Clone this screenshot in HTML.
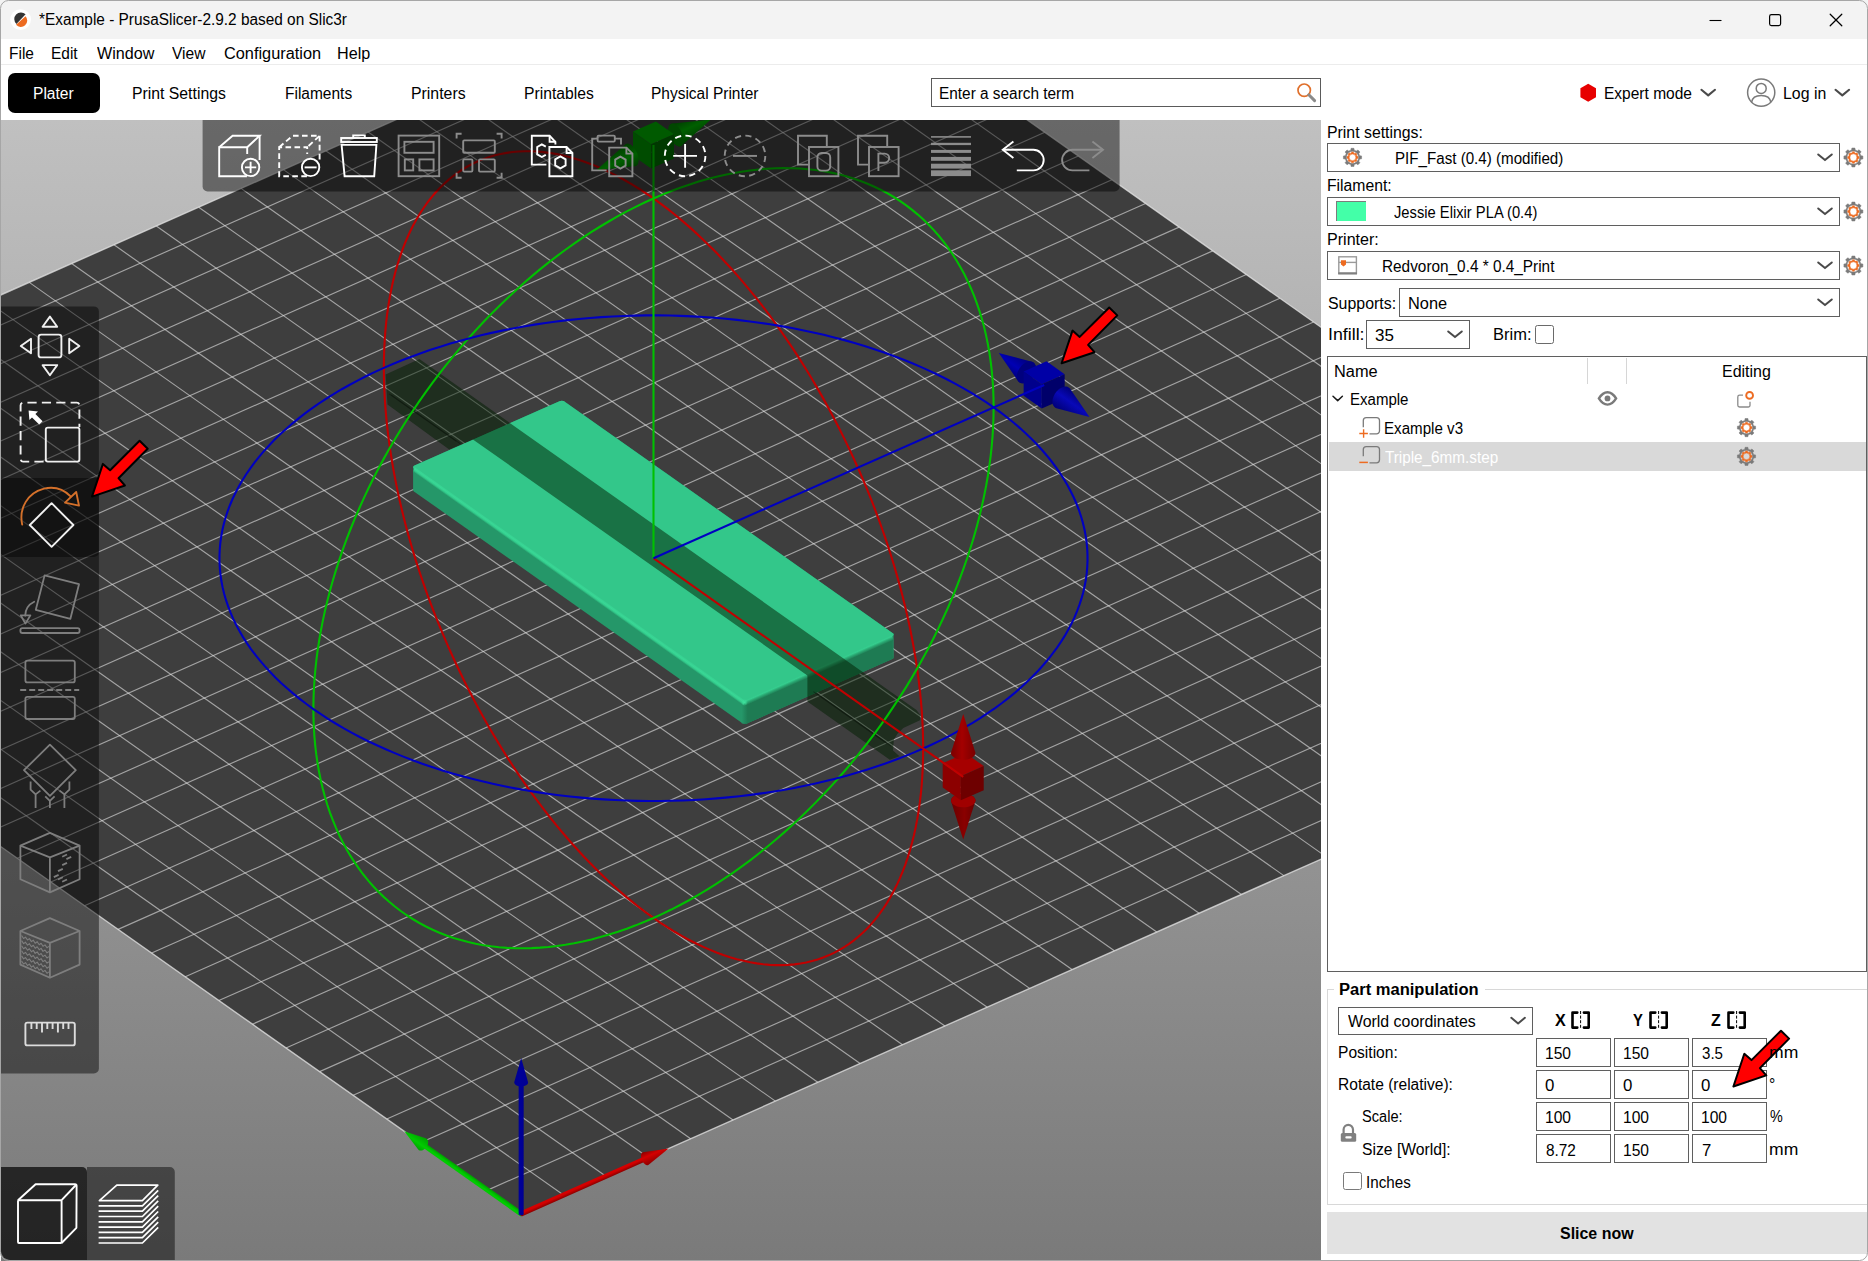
<!DOCTYPE html>
<html lang="en"><head><meta charset="utf-8"><title>*Example - PrusaSlicer-2.9.2 based on Slic3r</title>
<style>
html,body{margin:0;padding:0;background:#fff;}
body{width:1868px;height:1261px;position:relative;overflow:hidden;font-family:"Liberation Sans", "DejaVu Sans", sans-serif;}
.b{position:absolute;}
.t{position:absolute;white-space:pre;transform-origin:0 50%;}
svg{position:absolute;left:0;top:0;}
</style></head>
<body>
<div class="b" style="left:0px;top:0px;width:1868px;height:39px;background:#f3f3f3"></div>
<div class="b" style="left:0px;top:39px;width:1868px;height:1222px;background:#fff"></div>
<div class="b" style="left:0px;top:64px;width:1868px;height:1.4px;background:#ececec"></div>
<div class="b" style="left:8px;top:73px;width:92px;height:40px;background:#000;border-radius:7px"></div>
<div class="b" style="left:931px;top:78px;width:390px;height:29px;border:1px solid #5a5a5a;box-sizing:border-box;background:#fff"></div>
<div class="b" style="left:1327px;top:143px;width:513px;height:29px;border:1px solid #5f5f5f;box-sizing:border-box;background:#fff"></div>
<div class="b" style="left:1327px;top:197px;width:513px;height:29px;border:1px solid #5f5f5f;box-sizing:border-box;background:#fff"></div>
<div class="b" style="left:1336px;top:201px;width:30px;height:20px;background:#43ffa8;border-top:1px solid #7c7c7c;border-left:1px solid #7c7c7c;box-sizing:border-box"></div>
<div class="b" style="left:1327px;top:251px;width:513px;height:29px;border:1px solid #5f5f5f;box-sizing:border-box;background:#fff"></div>
<div class="b" style="left:1399px;top:288px;width:441px;height:29px;border:1px solid #5f5f5f;box-sizing:border-box;background:#fff"></div>
<div class="b" style="left:1366px;top:320px;width:104px;height:29px;border:1px solid #5f5f5f;box-sizing:border-box;background:#fff"></div>
<div class="b" style="left:1535px;top:325px;width:19px;height:19px;border:1px solid #6a6a6a;box-sizing:border-box;border-radius:2.5px;background:#fff"></div>
<div class="b" style="left:1327px;top:356px;width:540px;height:616px;border:1px solid #5f5f5f;box-sizing:border-box;background:#fff"></div>
<div class="b" style="left:1587px;top:357.5px;width:1px;height:26px;background:#d6d6d6"></div>
<div class="b" style="left:1626px;top:357.5px;width:1px;height:26px;background:#d6d6d6"></div>
<div class="b" style="left:1329px;top:442.3px;width:537px;height:28.3px;background:#d9d9d9"></div>
<div class="b" style="left:1327px;top:988.5px;width:545px;height:216.5px;border:1px solid #d8d8d8;box-sizing:border-box"></div>
<div class="b" style="left:1334px;top:980px;width:151px;height:18px;background:#fff"></div>
<div class="b" style="left:1338px;top:1006.5px;width:195px;height:28px;border:1px solid #5f5f5f;box-sizing:border-box;background:#fff"></div>
<div class="b" style="left:1536.2px;top:1038.3px;width:74.6px;height:28.3px;border:1px solid #5f5f5f;box-sizing:border-box;background:#fff"></div>
<div class="b" style="left:1614.2px;top:1038.3px;width:74.6px;height:28.3px;border:1px solid #5f5f5f;box-sizing:border-box;background:#fff"></div>
<div class="b" style="left:1692.2px;top:1038.3px;width:74.6px;height:28.3px;border:1px solid #5f5f5f;box-sizing:border-box;background:#fff"></div>
<div class="b" style="left:1536.2px;top:1070.4px;width:74.6px;height:28.3px;border:1px solid #5f5f5f;box-sizing:border-box;background:#fff"></div>
<div class="b" style="left:1614.2px;top:1070.4px;width:74.6px;height:28.3px;border:1px solid #5f5f5f;box-sizing:border-box;background:#fff"></div>
<div class="b" style="left:1692.2px;top:1070.4px;width:74.6px;height:28.3px;border:1px solid #5f5f5f;box-sizing:border-box;background:#fff"></div>
<div class="b" style="left:1536.2px;top:1102.4px;width:74.6px;height:28.3px;border:1px solid #5f5f5f;box-sizing:border-box;background:#fff"></div>
<div class="b" style="left:1614.2px;top:1102.4px;width:74.6px;height:28.3px;border:1px solid #5f5f5f;box-sizing:border-box;background:#fff"></div>
<div class="b" style="left:1692.2px;top:1102.4px;width:74.6px;height:28.3px;border:1px solid #5f5f5f;box-sizing:border-box;background:#fff"></div>
<div class="b" style="left:1536.2px;top:1134.4px;width:74.6px;height:28.3px;border:1px solid #5f5f5f;box-sizing:border-box;background:#fff"></div>
<div class="b" style="left:1614.2px;top:1134.4px;width:74.6px;height:28.3px;border:1px solid #5f5f5f;box-sizing:border-box;background:#fff"></div>
<div class="b" style="left:1692.2px;top:1134.4px;width:74.6px;height:28.3px;border:1px solid #5f5f5f;box-sizing:border-box;background:#fff"></div>
<div class="b" style="left:1343.3px;top:1171.6px;width:18.6px;height:18.2px;border:1px solid #7a7a7a;box-sizing:border-box;border-radius:2.5px;background:#fff"></div>
<div class="b" style="left:1327px;top:1212.2px;width:541px;height:42px;background:#e2e2e2"></div>
<svg id="view3d" width="1868" height="1261" viewBox="0 0 1868 1261">
<defs><clipPath id="vp"><rect x="1" y="120" width="1320" height="1141"/></clipPath></defs>
<g clip-path="url(#vp)">
<defs><linearGradient id="bg" x1="0" y1="0" x2="0" y2="1"><stop offset="0" stop-color="#c0c0c0"/><stop offset="1" stop-color="#7a7a7a"/></linearGradient></defs>
<rect x="1" y="120" width="1320" height="1141" fill="url(#bg)"/>
<polygon points="521.17,1213.86 1783.81,653.89 783.43,-52.13 -479.21,507.84" fill="#3e3e3e" />
<path d="M563.54 1195.07L-436.84 489.05M605.91 1176.28L-394.47 470.26M648.28 1157.49L-352.1 451.47M690.65 1138.7L-309.73 432.68M733.02 1119.91L-267.36 413.89M775.39 1101.12L-224.98 395.1M817.76 1082.33L-182.61 376.31M860.13 1063.53L-140.24 357.52M902.5 1044.74L-97.87 338.72M944.87 1025.95L-55.5 319.93M987.24 1007.16L-13.13 301.14M1029.61 988.37L29.24 282.35M1071.98 969.58L71.61 263.56M1114.36 950.79L113.98 244.77M1156.73 932L156.35 225.98M1199.1 913.21L198.72 207.19M1241.47 894.42L241.09 188.4M1283.84 875.62L283.46 169.61M1326.21 856.83L325.83 150.81M1368.58 838.04L368.2 132.02M1410.95 819.25L410.57 113.23M1453.32 800.46L452.94 94.44M1495.69 781.67L495.31 75.65M1538.06 762.88L537.68 56.86M1580.43 744.09L580.05 38.07M1622.8 725.3L622.43 19.28M1665.17 706.51L664.8 0.49M1707.54 687.71L707.17 -18.3M1749.91 668.92L749.54 -37.1" fill="none" stroke="#e6e6e6" stroke-opacity="0.6" stroke-width="1.15"/>
<path d="M487.58 1190.15L1750.22 630.18M453.98 1166.45L1716.62 606.47M420.39 1142.74L1683.03 582.77M386.8 1119.03L1649.44 559.06M353.21 1095.32L1615.85 535.35M319.61 1071.62L1582.26 511.64M286.02 1047.91L1548.66 487.94M252.43 1024.2L1515.07 464.23M218.84 1000.49L1481.48 440.52M185.25 976.78L1447.89 416.81M151.65 953.08L1414.29 393.1M118.06 929.37L1380.7 369.4M84.47 905.66L1347.11 345.69M50.88 881.95L1313.52 321.98M17.28 858.25L1279.93 298.27M-16.31 834.54L1246.33 274.57M-49.9 810.83L1212.74 250.86M-83.49 787.12L1179.15 227.15M-117.08 763.41L1145.56 203.44M-150.68 739.71L1111.96 179.73M-184.27 716L1078.37 156.03M-217.86 692.29L1044.78 132.32M-251.45 668.58L1011.19 108.61M-285.04 644.87L977.6 84.9M-318.64 621.17L944 61.2M-352.23 597.46L910.41 37.49M-385.82 573.75L876.82 13.78M-419.41 550.04L843.23 -9.93M-453.01 526.34L809.64 -33.64" fill="none" stroke="#e6e6e6" stroke-opacity="0.6" stroke-width="1.15"/>
<path d="M521.17 1213.86 L1783.81 653.89 L783.43 -52.13 L-479.21 507.84Z" fill="none" stroke="#e6e6e6" stroke-opacity="0.75" stroke-width="1.4"/>
<linearGradient id="ay" gradientUnits="userSpaceOnUse" x1="519.7" y1="1215.94" x2="522.63" y2="1211.79"><stop offset="0" stop-color="#00cc00"/><stop offset="0.4" stop-color="#00cc00"/><stop offset="1" stop-color="#00a000"/></linearGradient>
<polygon points="519.76,1215.98 421.33,1146.51 421.02,1146.22 420.82,1145.8 420.75,1145.28 420.82,1144.71 421.02,1144.11 421.33,1143.53 421.75,1143.02 422.23,1142.59 422.74,1142.29 423.26,1142.13 423.74,1142.13 424.15,1142.28 522.58,1211.75 522.89,1212.04 523.09,1212.46 523.16,1212.98 523.09,1213.55 522.89,1214.15 522.58,1214.73 522.16,1215.24 521.68,1215.67 521.17,1215.97 520.65,1216.13 520.17,1216.13" fill="url(#ay)" />
<linearGradient id="ayt" gradientUnits="userSpaceOnUse" x1="418.76" y1="1150.05" x2="426.73" y2="1138.75"><stop offset="0" stop-color="#00a000"/><stop offset="0.4" stop-color="#00cc00"/><stop offset="1" stop-color="#00a000"/></linearGradient>
<polygon points="418.23,1149.59 404.27,1131.36 425.76,1138.29 426.58,1138.64 427.25,1139.21 427.75,1139.98 428.06,1140.92 428.17,1141.99 428.06,1143.16 427.75,1144.37 427.25,1145.59 426.58,1146.75 425.76,1147.83 424.82,1148.78 423.8,1149.56 422.74,1150.13 421.68,1150.49 420.67,1150.62 419.73,1150.5 418.91,1150.16" fill="url(#ayt)" />
<linearGradient id="ax" gradientUnits="userSpaceOnUse" x1="520.14" y1="1211.55" x2="522.2" y2="1216.18"><stop offset="0" stop-color="#d40000"/><stop offset="0.4" stop-color="#d40000"/><stop offset="1" stop-color="#8c0000"/></linearGradient>
<polygon points="646.43,1161.08 522.28,1216.14 521.96,1216.24 521.58,1216.19 521.17,1215.97 520.76,1215.61 520.38,1215.13 520.05,1214.56 519.8,1213.95 519.64,1213.33 519.59,1212.75 519.64,1212.24 519.8,1211.84 520.05,1211.58 644.2,1156.53 644.52,1156.42 644.9,1156.48 645.31,1156.7 645.72,1157.06 646.1,1157.54 646.43,1158.1 646.68,1158.72 646.84,1159.34 646.89,1159.92 646.84,1160.43 646.68,1160.82" fill="url(#ax)" />
<linearGradient id="axt" gradientUnits="userSpaceOnUse" x1="642.52" y1="1152.49" x2="648.11" y2="1165.11"><stop offset="0" stop-color="#8c0000"/><stop offset="0.4" stop-color="#d40000"/><stop offset="1" stop-color="#8c0000"/></linearGradient>
<polygon points="642.92,1152.35 668.62,1148.47 648.35,1165.01 647.7,1165.26 646.96,1165.27 646.15,1165.02 645.31,1164.54 644.47,1163.84 643.67,1162.94 642.92,1161.89 642.27,1160.71 641.74,1159.47 641.34,1158.2 641.1,1156.95 641.01,1155.77 641.1,1154.71 641.34,1153.81 641.74,1153.09 642.27,1152.6" fill="url(#axt)" />
<linearGradient id="az" gradientUnits="userSpaceOnUse" x1="518.64" y1="1213.86" x2="523.69" y2="1213.86"><stop offset="0" stop-color="#000099"/><stop offset="0.4" stop-color="#000099"/><stop offset="1" stop-color="#000090"/></linearGradient>
<polygon points="518.64,1213.7 518.64,1082.38 518.8,1082.02 519.13,1081.7 519.59,1081.43 520.16,1081.24 520.8,1081.14 521.46,1081.14 522.1,1081.23 522.68,1081.41 523.16,1081.67 523.5,1081.98 523.68,1082.34 523.69,1082.71 523.69,1214.03 523.53,1214.39 523.21,1214.71 522.75,1214.98 522.18,1215.17 521.54,1215.27 520.88,1215.27 520.23,1215.18 519.65,1215 519.18,1214.75 518.84,1214.43 518.65,1214.07" fill="url(#az)" />
<linearGradient id="azt" gradientUnits="userSpaceOnUse" x1="514.27" y1="1082.55" x2="528.07" y2="1082.55"><stop offset="0" stop-color="#000090"/><stop offset="0.4" stop-color="#000099"/><stop offset="1" stop-color="#000090"/></linearGradient>
<polygon points="521.17,1057.9 528.07,1082.23 528.04,1082.99 527.76,1083.74 527.22,1084.43 526.44,1085.06 525.47,1085.58 524.33,1085.99 523.07,1086.27 521.73,1086.41 520.37,1086.39 519.05,1086.23 517.8,1085.93 516.69,1085.5 515.74,1084.95 515.01,1084.32 514.51,1083.61 514.27,1082.86 514.29,1082.1" fill="url(#azt)" />

<polygon points="413.1,490.26 413.1,467.4 413.11,466.99 413.27,466.58 413.56,466.2 413.98,465.86 414.52,465.57 559.42,401.31 560.05,401.08 560.74,400.93 561.47,400.86 562.21,400.86 562.94,400.95 563.62,401.12 564.23,401.35 564.74,401.65 892.84,633.21 893.24,633.55 893.51,633.94 893.64,634.35 893.64,657.21 893.63,657.62 893.47,658.03 893.18,658.41 892.76,658.75 892.22,659.04 747.32,723.3 746.69,723.53 746,723.68 745.27,723.75 744.53,723.75 743.8,723.66 743.12,723.49 742.51,723.26 742,722.96 413.9,491.4 413.5,491.06 413.23,490.67" fill="#259769" />
<polygon points="744.53,700.89 745.27,700.9 746,700.82 746.69,700.67 747.32,700.45 892.22,636.18 892.76,635.89 893.18,635.55 893.47,635.17 893.63,634.76 893.64,634.35 893.51,633.94 893.24,633.55 892.84,633.21 892.84,656.06 893.24,656.41 893.51,656.8 893.64,657.21 893.63,657.62 893.47,658.03 893.18,658.41 892.76,658.75 892.22,659.04 747.32,723.3 746.69,723.53 746,723.68 745.27,723.75 744.53,723.75" fill="#1e7b53" />
<linearGradient id="pcg" gradientUnits="userSpaceOnUse" x1="741.75" y1="0" x2="747.75" y2="0"><stop offset="0" stop-color="#259769"/><stop offset="1" stop-color="#1e7b53"/></linearGradient>
<rect x="741.75" y="701.76" width="6" height="21.66" fill="url(#pcg)"/>
<polygon points="742,700.1 742.51,700.4 743.12,700.64 743.8,700.8 744.53,700.89 745.27,700.9 746,700.82 746.69,700.67 747.32,700.45 892.22,636.18 892.76,635.89 893.18,635.55 893.47,635.17 893.63,634.76 893.64,634.35 893.51,633.94 893.24,633.55 892.84,633.21 564.74,401.65 564.23,401.35 563.62,401.12 562.94,400.95 562.21,400.86 561.47,400.86 560.74,400.93 560.05,401.08 559.42,401.31 414.52,465.57 413.98,465.86 413.56,466.2 413.27,466.58 413.11,466.99 413.1,467.4 413.23,467.81 413.5,468.2 413.9,468.55" fill="#33c78a" />
<linearGradient id="pfx" gradientUnits="userSpaceOnUse" x1="743.34" y1="705.53" x2="746.49" y2="701.08"><stop offset="0" stop-color="#259769"/><stop offset="0.3" stop-color="#32c98a"/><stop offset="0.55" stop-color="#39d795"/><stop offset="0.8" stop-color="#37d292"/><stop offset="1" stop-color="#33c78a"/></linearGradient>
<polygon points="743.34,705.53 412.9,472.32 414.8,466.99 745.25,700.2" fill="url(#pfx)" />
<linearGradient id="pfy" gradientUnits="userSpaceOnUse" x1="745.62" y1="705.68" x2="743.32" y2="700.48"><stop offset="0" stop-color="#1e7b53"/><stop offset="0.45" stop-color="#2aa973"/><stop offset="0.75" stop-color="#35cd8e"/><stop offset="1" stop-color="#33c78a"/></linearGradient>
<polygon points="745.62,705.68 893.49,640.1 891.98,634.55 744.11,700.13" fill="url(#pfy)" />
<radialGradient id="pcs" gradientUnits="userSpaceOnUse" cx="744.52" cy="702.48" r="3.4"><stop offset="0" stop-color="#3fe09c"/><stop offset="1" stop-color="#3fe09c" stop-opacity="0"/></radialGradient>
<circle cx="744.52" cy="702.48" r="3.4" fill="url(#pcs)"/>
<path d="M385.6 374.5 L419.4 359.1 L916.5 710 L920.5 715.6 L920 720.2 L903.3 727.9 L897.5 733.7 L893.9 739.5 L893 750.4 L899.5 756.2 L889.8 759.7 L807.4 701.5 L807.4 675.5 L472.9 439.4 L449.2 449.6 L387.5 404.5Z" fill="#001e00" fill-opacity="0.5"/>
<path d="M456.32 441.31L389.14 393.9" stroke="#0a140a" stroke-opacity="0.45" stroke-width="1.1" fill="none"/>
<path d="M460.14 443.63L391.28 395.03" stroke="#0a140a" stroke-opacity="0.45" stroke-width="1.1" fill="none"/>
<path d="M887.32 743.81L813.42 691.66" stroke="#0a140a" stroke-opacity="0.45" stroke-width="1.1" fill="none"/>
<path d="M891.14 746.13L817.24 693.97" stroke="#0a140a" stroke-opacity="0.45" stroke-width="1.1" fill="none"/>
<path d="M383.86 367.9 L383.95 358.55 L384.22 349.33 L384.69 340.26 L385.33 331.34 L386.16 322.57 L387.18 313.96 L388.37 305.53 L389.75 297.26 L391.31 289.17 L393.04 281.27 L394.96 273.56 L397.05 266.04 L399.32 258.73 L401.77 251.62 L404.38 244.71 L407.17 238.03 L410.12 231.56 L413.24 225.32 L416.53 219.3 L419.98 213.52 L423.59 207.97 L427.36 202.67 L431.28 197.6 L435.35 192.79 L439.58 188.22 L443.95 183.91 L448.46 179.86 L453.12 176.06 L457.91 172.53 L462.83 169.26 L467.89 166.25 L473.07 163.52 L478.38 161.06 L483.81 158.86 L489.35 156.95 L495.01 155.3 L500.77 153.94 L506.64 152.85 L512.61 152.03 L518.68 151.5 L524.84 151.24 L531.08 151.27 L537.42 151.57 L543.83 152.15 L550.31 153.01 L556.87 154.15 L563.49 155.56 L570.18 157.25 L576.92 159.22 L583.71 161.46 L590.55 163.97 L597.44 166.75 L604.36 169.8 L611.32 173.11 L618.3 176.69 L625.31 180.53 L632.34 184.63 L639.39 188.99 L646.44 193.6 L653.5 198.45 L660.56 203.56 L667.61 208.91 L674.66 214.49 L681.69 220.32 L688.7 226.37 L695.68 232.65 L702.64 239.16 L709.56 245.88 L716.45 252.82 L723.29 259.97 L730.08 267.32 L736.82 274.87 L743.51 282.61 L750.13 290.55 L756.69 298.66 L763.17 306.96 L769.58 315.43 L775.92 324.06 L782.16 332.85 L788.32 341.8 L794.39 350.9 L800.36 360.14 L806.23 369.51 L811.99 379.02 L817.65 388.64 L823.19 398.39 L828.62 408.24 L833.93 418.19 L839.11 428.25 L844.17 438.39 L849.09 448.61 L853.88 458.91 L858.54 469.27 L863.05 479.7 L867.42 490.18 L871.65 500.7 L875.72 511.27 L879.64 521.87 L883.41 532.49 L887.02 543.13 L890.47 553.79 L893.76 564.44 L896.88 575.09 L899.83 585.73 L902.62 596.35 L905.23 606.94 L907.68 617.5 L909.95 628.02 L912.04 638.49 L913.96 648.91 L915.69 659.26 L917.25 669.55 L918.63 679.76 L919.82 689.88 L920.84 699.92 L921.67 709.86 L922.31 719.69 L922.78 729.41 L923.05 739.02 L923.14 748.5 L923.05 757.85 L922.78 767.07 L922.31 776.14 L921.67 785.06 L920.84 793.83 L919.82 802.44 L918.63 810.87 L917.25 819.14 L915.69 827.23 L913.96 835.13 L912.04 842.84 L909.95 850.36 L907.68 857.67 L905.23 864.78 L902.62 871.69 L899.83 878.37 L896.88 884.84 L893.76 891.08 L890.47 897.1 L887.02 902.88 L883.41 908.43 L879.64 913.73 L875.72 918.8 L871.65 923.61 L867.42 928.18 L863.05 932.49 L858.54 936.54 L853.88 940.34 L849.09 943.87 L844.17 947.14 L839.11 950.15 L833.93 952.88 L828.62 955.34 L823.19 957.54 L817.65 959.45 L811.99 961.1 L806.23 962.46 L800.36 963.55 L794.39 964.37 L788.32 964.9 L782.16 965.16 L775.92 965.13 L769.58 964.83 L763.17 964.25 L756.69 963.39 L750.13 962.25 L743.51 960.84 L736.82 959.15 L730.08 957.18 L723.29 954.94 L716.45 952.43 L709.56 949.65 L702.64 946.6 L695.68 943.29 L688.7 939.71 L681.69 935.87 L674.66 931.77 L667.61 927.41 L660.56 922.8 L653.5 917.95 L646.44 912.84 L639.39 907.49 L632.34 901.91 L625.31 896.08 L618.3 890.03 L611.32 883.75 L604.36 877.24 L597.44 870.52 L590.55 863.58 L583.71 856.43 L576.92 849.08 L570.18 841.53 L563.49 833.79 L556.87 825.85 L550.31 817.74 L543.83 809.44 L537.42 800.97 L531.08 792.34 L524.84 783.55 L518.68 774.6 L512.61 765.5 L506.64 756.26 L500.77 746.89 L495.01 737.38 L489.35 727.76 L483.81 718.01 L478.38 708.16 L473.07 698.21 L467.89 688.15 L462.83 678.01 L457.91 667.79 L453.12 657.49 L448.46 647.13 L443.95 636.7 L439.58 626.22 L435.35 615.7 L431.28 605.13 L427.36 594.53 L423.59 583.91 L419.98 573.27 L416.53 562.61 L413.24 551.96 L410.12 541.31 L407.17 530.67 L404.38 520.05 L401.77 509.46 L399.32 498.9 L397.05 488.38 L394.96 477.91 L393.04 467.49 L391.31 457.14 L389.75 446.85 L388.37 436.64 L387.18 426.52 L386.16 416.48 L385.33 406.54 L384.69 396.71 L384.22 386.99 L383.95 377.38Z" stroke="#c10000" stroke-width="2.1" fill="none"/>
<path d="M993.61 407.36 L993.49 398 L993.14 388.74 L992.56 379.6 L991.74 370.59 L990.7 361.7 L989.42 352.94 L987.91 344.33 L986.18 335.87 L984.21 327.55 L982.02 319.4 L979.6 311.4 L976.96 303.58 L974.1 295.93 L971.02 288.46 L967.72 281.18 L964.2 274.08 L960.48 267.18 L956.54 260.48 L952.39 253.99 L948.04 247.7 L943.49 241.62 L938.74 235.77 L933.79 230.13 L928.65 224.72 L923.33 219.53 L917.81 214.58 L912.12 209.87 L906.25 205.39 L900.21 201.16 L893.99 197.16 L887.61 193.42 L881.08 189.93 L874.38 186.69 L867.54 183.7 L860.54 180.97 L853.41 178.5 L846.14 176.29 L838.74 174.34 L831.21 172.65 L823.55 171.23 L815.79 170.08 L807.91 169.19 L799.92 168.56 L791.83 168.21 L783.65 168.12 L775.38 168.29 L767.03 168.74 L758.6 169.45 L750.1 170.43 L741.53 171.67 L732.9 173.18 L724.21 174.95 L715.48 176.99 L706.7 179.29 L697.89 181.84 L689.05 184.66 L680.18 187.73 L671.3 191.05 L662.4 194.63 L653.5 198.45 L644.6 202.53 L635.7 206.84 L626.82 211.4 L617.95 216.19 L609.11 221.22 L600.3 226.48 L591.52 231.97 L582.79 237.68 L574.1 243.61 L565.47 249.75 L556.9 256.11 L548.4 262.67 L539.97 269.44 L531.62 276.4 L523.35 283.56 L515.17 290.91 L507.08 298.43 L499.09 306.14 L491.21 314.02 L483.45 322.07 L475.79 330.28 L468.26 338.64 L460.86 347.16 L453.59 355.82 L446.46 364.62 L439.46 373.55 L432.62 382.61 L425.92 391.79 L419.39 401.08 L413.01 410.48 L406.79 419.98 L400.75 429.58 L394.88 439.26 L389.19 449.03 L383.67 458.87 L378.35 468.77 L373.21 478.74 L368.26 488.77 L363.51 498.84 L358.96 508.95 L354.61 519.1 L350.46 529.27 L346.52 539.47 L342.8 549.67 L339.28 559.88 L335.98 570.1 L332.9 580.3 L330.04 590.49 L327.4 600.65 L324.98 610.79 L322.79 620.89 L320.82 630.94 L319.09 640.95 L317.58 650.9 L316.3 660.79 L315.26 670.61 L314.44 680.35 L313.86 690 L313.51 699.57 L313.39 709.04 L313.51 718.4 L313.86 727.66 L314.44 736.8 L315.26 745.81 L316.3 754.7 L317.58 763.46 L319.09 772.07 L320.82 780.53 L322.79 788.85 L324.98 797 L327.4 805 L330.04 812.82 L332.9 820.47 L335.98 827.94 L339.28 835.22 L342.8 842.32 L346.52 849.22 L350.46 855.92 L354.61 862.41 L358.96 868.7 L363.51 874.78 L368.26 880.63 L373.21 886.27 L378.35 891.68 L383.67 896.87 L389.19 901.82 L394.88 906.53 L400.75 911.01 L406.79 915.24 L413.01 919.24 L419.39 922.98 L425.92 926.47 L432.62 929.71 L439.46 932.7 L446.46 935.43 L453.59 937.9 L460.86 940.11 L468.26 942.06 L475.79 943.75 L483.45 945.17 L491.21 946.32 L499.09 947.21 L507.08 947.84 L515.17 948.19 L523.35 948.28 L531.62 948.11 L539.97 947.66 L548.4 946.95 L556.9 945.97 L565.47 944.73 L574.1 943.22 L582.79 941.45 L591.52 939.41 L600.3 937.11 L609.11 934.56 L617.95 931.74 L626.82 928.67 L635.7 925.35 L644.6 921.77 L653.5 917.95 L662.4 913.87 L671.3 909.56 L680.18 905 L689.05 900.21 L697.89 895.18 L706.7 889.92 L715.48 884.43 L724.21 878.72 L732.9 872.79 L741.53 866.65 L750.1 860.29 L758.6 853.73 L767.03 846.96 L775.38 840 L783.65 832.84 L791.83 825.49 L799.92 817.97 L807.91 810.26 L815.79 802.38 L823.55 794.33 L831.21 786.12 L838.74 777.76 L846.14 769.24 L853.41 760.58 L860.54 751.78 L867.54 742.85 L874.38 733.79 L881.08 724.61 L887.61 715.32 L893.99 705.92 L900.21 696.42 L906.25 686.82 L912.12 677.14 L917.81 667.37 L923.33 657.53 L928.65 647.63 L933.79 637.66 L938.74 627.63 L943.49 617.56 L948.04 607.45 L952.39 597.3 L956.54 587.13 L960.48 576.93 L964.2 566.73 L967.72 556.52 L971.02 546.3 L974.1 536.1 L976.96 525.91 L979.6 515.75 L982.02 505.61 L984.21 495.51 L986.18 485.46 L987.91 475.45 L989.42 465.5 L990.7 455.61 L991.74 445.79 L992.56 436.05 L993.14 426.4 L993.49 416.83Z" stroke="#00c100" stroke-width="2.1" fill="none"/>
<path d="M993.61 407.36 L986.43 402.43 L979.03 397.61 L971.4 392.9 L963.56 388.3 L955.5 383.82 L947.24 379.45 L938.77 375.21 L930.11 371.09 L921.26 367.11 L912.23 363.25 L903.02 359.53 L893.64 355.94 L884.09 352.49 L874.39 349.18 L864.53 346.02 L854.53 343 L844.39 340.13 L834.12 337.41 L823.73 334.84 L813.22 332.42 L802.6 330.16 L791.88 328.05 L781.06 326.1 L770.16 324.31 L759.18 322.69 L748.12 321.22 L737 319.91 L725.82 318.77 L714.59 317.79 L703.33 316.98 L692.02 316.33 L680.69 315.85 L669.34 315.53 L657.98 315.38 L646.62 315.4 L635.26 315.58 L623.92 315.93 L612.59 316.45 L601.3 317.13 L590.03 317.98 L578.82 318.99 L567.65 320.16 L556.54 321.5 L545.5 323 L534.53 324.66 L523.65 326.48 L512.85 328.46 L502.15 330.6 L491.56 332.89 L481.07 335.34 L470.7 337.94 L460.46 340.7 L450.35 343.6 L440.38 346.64 L430.56 349.84 L420.88 353.17 L411.37 356.65 L402.02 360.26 L392.85 364.01 L383.86 367.9 L375.04 371.91 L366.43 376.05 L358 380.32 L349.78 384.71 L341.77 389.21 L333.97 393.84 L326.39 398.57 L319.04 403.42 L311.91 408.37 L305.02 413.42 L298.36 418.57 L291.95 423.82 L285.79 429.16 L279.88 434.59 L274.23 440.11 L268.83 445.7 L263.7 451.37 L258.84 457.12 L254.25 462.93 L249.93 468.81 L245.88 474.75 L242.12 480.75 L238.64 486.8 L235.44 492.9 L232.53 499.05 L229.91 505.23 L227.58 511.45 L225.54 517.71 L223.79 523.99 L222.34 530.29 L221.18 536.62 L220.32 542.96 L219.76 549.3 L219.49 555.66 L219.52 562.02 L219.85 568.37 L220.48 574.72 L221.4 581.05 L222.62 587.38 L224.14 593.68 L225.94 599.95 L228.05 606.2 L230.44 612.41 L233.12 618.59 L236.09 624.73 L239.35 630.82 L242.89 636.86 L246.71 642.85 L250.81 648.78 L255.19 654.64 L259.84 660.44 L264.76 666.17 L269.95 671.83 L275.4 677.41 L281.11 682.91 L287.07 688.32 L293.28 693.64 L299.75 698.87 L306.45 704 L313.39 709.04 L320.57 713.97 L327.97 718.79 L335.6 723.5 L343.44 728.1 L351.5 732.58 L359.76 736.95 L368.23 741.19 L376.89 745.31 L385.74 749.29 L394.77 753.15 L403.98 756.87 L413.36 760.46 L422.91 763.91 L432.61 767.22 L442.47 770.38 L452.47 773.4 L462.61 776.27 L472.88 778.99 L483.27 781.56 L493.78 783.98 L504.4 786.24 L515.12 788.35 L525.94 790.3 L536.84 792.09 L547.82 793.71 L558.88 795.18 L570 796.49 L581.18 797.63 L592.41 798.61 L603.67 799.42 L614.98 800.07 L626.31 800.55 L637.66 800.87 L649.02 801.02 L660.38 801 L671.74 800.82 L683.08 800.47 L694.41 799.95 L705.7 799.27 L716.97 798.42 L728.18 797.41 L739.35 796.24 L750.46 794.9 L761.5 793.4 L772.47 791.74 L783.35 789.92 L794.15 787.94 L804.85 785.8 L815.44 783.51 L825.93 781.06 L836.3 778.46 L846.54 775.7 L856.65 772.8 L866.62 769.76 L876.44 766.56 L886.12 763.23 L895.63 759.75 L904.98 756.14 L914.15 752.39 L923.14 748.5 L931.96 744.49 L940.57 740.35 L949 736.08 L957.22 731.69 L965.23 727.19 L973.03 722.56 L980.61 717.83 L987.96 712.98 L995.09 708.03 L1001.98 702.98 L1008.64 697.83 L1015.05 692.58 L1021.21 687.24 L1027.12 681.81 L1032.77 676.29 L1038.17 670.7 L1043.3 665.03 L1048.16 659.28 L1052.75 653.47 L1057.07 647.59 L1061.12 641.65 L1064.88 635.65 L1068.36 629.6 L1071.56 623.5 L1074.47 617.35 L1077.09 611.17 L1079.42 604.95 L1081.46 598.69 L1083.21 592.41 L1084.66 586.11 L1085.82 579.78 L1086.68 573.44 L1087.24 567.1 L1087.51 560.74 L1087.48 554.38 L1087.15 548.03 L1086.52 541.68 L1085.6 535.35 L1084.38 529.02 L1082.86 522.72 L1081.06 516.45 L1078.95 510.2 L1076.56 503.99 L1073.88 497.81 L1070.91 491.67 L1067.65 485.58 L1064.11 479.54 L1060.29 473.55 L1056.19 467.62 L1051.81 461.76 L1047.16 455.96 L1042.24 450.23 L1037.05 444.57 L1031.6 438.99 L1025.89 433.49 L1019.93 428.08 L1013.72 422.76 L1007.25 417.53 L1000.55 412.4Z" stroke="#0000c1" stroke-width="2.1" fill="none"/>
<linearGradient id="cb1" gradientUnits="userSpaceOnUse" x1="1019.34" y1="382.31" x2="1033.36" y2="362.45"><stop offset="0" stop-color="#000078"/><stop offset="0.45" stop-color="#0000b4"/><stop offset="1" stop-color="#000078"/></linearGradient>
<polygon points="998.81,352.94 1031.96,361.74 1033.09,362.26 1034.06,363.03 1034.85,364.04 1035.42,365.24 1035.77,366.63 1035.89,368.15 1035.77,369.78 1035.42,371.48 1034.85,373.19 1034.06,374.89 1033.09,376.52 1031.96,378.05 1030.68,379.45 1029.3,380.67 1027.84,381.68 1026.35,382.47 1024.86,383 1023.41,383.28 1022.02,383.29 1020.75,383.02 1019.61,382.5 1018.64,381.73 1017.86,380.73" fill="url(#cb1)" />
<polygon points="1035.89,368.15 1035.77,366.63 1035.42,365.24 1034.85,364.04 1034.06,363.03 1033.09,362.26 1031.96,361.74 1030.68,361.48 1029.3,361.49 1027.84,361.76 1026.35,362.3 1024.86,363.08 1023.41,364.1 1022.02,365.32 1020.75,366.71 1019.61,368.24 1018.64,369.88 1017.86,371.57 1017.29,373.29 1016.94,374.98 1016.82,376.61 1016.94,378.14 1017.29,379.52 1017.86,380.73 1018.64,381.73 1019.61,382.5 1020.75,383.02 1022.02,383.29 1023.41,383.28 1024.86,383 1026.35,382.47 1027.84,381.68 1029.3,380.67 1030.68,379.45 1031.96,378.05 1033.09,376.52 1034.06,374.89 1034.85,373.19 1035.42,371.48 1035.77,369.78" fill="#00007e" />
<polygon points="1041.79,384.32 1064.67,374.17 1046.53,361.37 1023.65,371.52" fill="#0000a6" />
<polygon points="1041.79,408.52 1023.65,395.72 1023.65,371.52 1041.79,384.32" fill="#00008c" />
<polygon points="1041.79,408.52 1064.67,398.38 1064.67,374.17 1041.79,384.32" fill="#00006a" />
<linearGradient id="cb2" gradientUnits="userSpaceOnUse" x1="1068.97" y1="387.58" x2="1054.95" y2="407.44"><stop offset="0" stop-color="#000078"/><stop offset="0.45" stop-color="#0808b8"/><stop offset="1" stop-color="#000078"/></linearGradient>
<polygon points="1089.51,416.95 1056.36,408.16 1055.22,407.63 1054.25,406.86 1053.47,405.86 1052.89,404.65 1052.54,403.27 1052.43,401.74 1052.54,400.11 1052.89,398.42 1053.47,396.7 1054.25,395.01 1055.22,393.37 1056.36,391.84 1057.63,390.45 1059.01,389.23 1060.47,388.21 1061.96,387.43 1063.45,386.89 1064.91,386.62 1066.29,386.61 1067.56,386.87 1068.7,387.39 1069.67,388.16 1070.45,389.17" fill="url(#cb2)" />
<linearGradient id="cr2" gradientUnits="userSpaceOnUse" x1="975.38" y1="800.54" x2="951.06" y2="800.54"><stop offset="0" stop-color="#6a0000"/><stop offset="0.45" stop-color="#8a0000"/><stop offset="1" stop-color="#6a0000"/></linearGradient>
<polygon points="951.29,801.88 951.06,800.82 951.13,799.76 951.5,798.71 952.16,797.71 953.09,796.77 954.26,795.93 955.66,795.2 957.25,794.61 958.98,794.16 960.81,793.87 962.71,793.74 964.62,793.78 966.49,793.98 968.28,794.35 969.95,794.87 971.45,795.53 972.75,796.31 973.82,797.2 974.62,798.17 975.15,799.19 975.38,800.25 975.31,801.32 963.22,839.53" fill="url(#cr2)" />
<polygon points="972.75,796.31 971.45,795.53 969.95,794.87 968.28,794.35 966.49,793.98 964.62,793.78 962.71,793.74 960.81,793.87 958.98,794.16 957.25,794.61 955.66,795.2 954.26,795.93 953.09,796.77 952.16,797.71 951.5,798.71 951.13,799.76 951.06,800.82 951.29,801.88 951.82,802.91 952.62,803.88 953.69,804.77 954.99,805.55 956.49,806.21 958.16,806.73 959.95,807.09 961.82,807.3 963.73,807.34 965.63,807.21 967.46,806.92 969.19,806.47 970.78,805.87 972.18,805.15 973.35,804.31 974.28,803.37 974.94,802.37 975.31,801.32 975.38,800.25 975.15,799.19 974.62,798.17 973.82,797.2" fill="#a00000" />
<polygon points="960.85,776.16 983.73,766.01 965.59,753.21 942.71,763.36" fill="#a60000" />
<polygon points="960.85,800.36 942.71,787.56 942.71,763.36 960.85,776.16" fill="#8c0000" />
<polygon points="960.85,800.36 983.73,790.21 983.73,766.01 960.85,776.16" fill="#6e0000" />
<linearGradient id="cr1" gradientUnits="userSpaceOnUse" x1="951.06" y1="753.03" x2="975.38" y2="753.03"><stop offset="0" stop-color="#7a0000"/><stop offset="0.45" stop-color="#a40000"/><stop offset="1" stop-color="#7a0000"/></linearGradient>
<polygon points="951.06,753.32 951.13,752.25 963.22,714.04 975.15,751.69 975.38,752.75 975.31,753.82 974.94,754.86 974.28,755.87 973.35,756.8 972.18,757.64 970.78,758.37 969.19,758.96 967.46,759.41 965.63,759.71 963.73,759.83 961.82,759.79 959.95,759.59 958.16,759.22 956.49,758.7 954.99,758.04 953.69,757.26 952.62,756.37 951.82,755.41 951.29,754.38" fill="url(#cr1)" />
<linearGradient id="cg1" gradientUnits="userSpaceOnUse" x1="671.04" y1="123.94" x2="680.88" y2="146.12"><stop offset="0" stop-color="#007000"/><stop offset="0.45" stop-color="#00b000"/><stop offset="1" stop-color="#007000"/></linearGradient>
<polygon points="710.7,119.62 682.07,145.27 681.3,145.93 680.4,146.32 679.39,146.43 678.29,146.27 677.14,145.82 675.96,145.11 674.77,144.15 673.62,142.97 672.52,141.59 671.51,140.05 670.61,138.39 669.84,136.64 669.22,134.85 668.77,133.07 668.49,131.34 668.4,129.69 668.49,128.18 668.77,126.84 669.22,125.7 669.84,124.79 670.61,124.13 671.51,123.73 672.52,123.62" fill="url(#cg1)" />
<polygon points="668.4,129.69 668.49,128.18 668.77,126.84 669.22,125.7 669.84,124.79 670.61,124.13 671.51,123.73 672.52,123.62 673.62,123.79 674.77,124.23 675.96,124.94 677.14,125.9 678.29,127.09 679.39,128.46 680.4,130.01 681.3,131.67 682.07,133.42 682.69,135.2 683.14,136.99 683.42,138.72 683.51,140.36 683.42,141.87 683.14,143.22 682.69,144.36 682.07,145.27 681.3,145.93 680.4,146.32 679.39,146.43 678.29,146.27 677.14,145.82 675.96,145.11 674.77,144.15 673.62,142.97 672.52,141.59 671.51,140.05 670.61,138.39 669.84,136.64 669.22,134.85 668.77,133.07 668.49,131.34" fill="#008400" />
<polygon points="651.13,144.36 674.01,134.21 655.87,121.41 632.99,131.56" fill="#00a600" />
<polygon points="651.13,168.56 632.99,155.76 632.99,131.56 651.13,144.36" fill="#008c00" />
<polygon points="651.13,168.56 674.01,158.42 674.01,134.21 651.13,144.36" fill="#006a00" />
<linearGradient id="cg2" gradientUnits="userSpaceOnUse" x1="635.96" y1="166.04" x2="626.12" y2="143.86"><stop offset="0" stop-color="#007000"/><stop offset="0.45" stop-color="#00b000"/><stop offset="1" stop-color="#007000"/></linearGradient>
<polygon points="596.3,170.36 624.93,144.7 625.7,144.04 626.6,143.65 627.61,143.54 628.71,143.71 629.86,144.15 631.04,144.86 632.23,145.82 633.38,147 634.48,148.38 635.49,149.92 636.39,151.59 637.16,153.33 637.78,155.12 638.23,156.9 638.51,158.64 638.6,160.28 638.51,161.79 638.23,163.14 637.78,164.28 637.16,165.19 636.39,165.85 635.49,166.24 634.48,166.35" fill="url(#cg2)" />
<path d="M653.5 558.2L963.22 776.79" stroke="#c10000" stroke-width="2.1" fill="none"/>
<path d="M653.5 558.2L653.5 144.99" stroke="#00c100" stroke-width="2.1" fill="none"/>
<path d="M653.5 558.2L1044.16 384.95" stroke="#0000c1" stroke-width="2.1" fill="none"/>
<path d="M202.6 120H1119.6V186.5a5 5 0 0 1-5 5H207.6a5 5 0 0 1-5-5Z" fill="#000" fill-opacity="0.46"/>
<g transform="translate(0 0)" fill="none" stroke="#ffffff" stroke-width="1.9"  stroke-linejoin="miter"><path d="M246.9 176.2H219.2V147.2H247.2V154"/><path d="M219.2 147.2L232.6 135.8H259.6L247.2 147.2"/><path d="M259.6 135.8V160"/></g>
<g fill="none" stroke="#ffffff" stroke-width="1.9" ><circle cx="250.6" cy="167.4" r="8.7"/><path d="M245 167.4H256.2M250.6 161.8V173"/></g>
<g transform="translate(60 0)" fill="none" stroke="#ffffff" stroke-width="1.9" stroke-dasharray="5.6 3.4" stroke-linejoin="miter"><path d="M246.9 176.2H219.2V147.2H247.2V154"/><path d="M219.2 147.2L232.6 135.8H259.6L247.2 147.2"/><path d="M259.6 135.8V160"/></g>
<g fill="none" stroke="#ffffff" stroke-width="1.9" ><circle cx="310.6" cy="167.4" r="8.7"/><path d="M304.6 167.4H316.6"/></g>
<g fill="none" stroke="#ffffff" stroke-width="1.9" ><path d="M353.2 138V135.4H364.8V138"/><rect x="341.2" y="138" width="35.6" height="4"/><path d="M341.6 144.9H376.4L374.2 176.2H344.6Z"/></g>
<g fill="none" stroke="#8c8c8c" stroke-width="1.9" ><rect x="398.6" y="135.6" width="40.6" height="40.6"/><rect x="404.4" y="141.8" width="29.2" height="11"/><rect x="404.8" y="159.4" width="8.4" height="11"/><rect x="419.4" y="159.4" width="14.2" height="11"/></g>
<g fill="none" stroke="#8c8c8c" stroke-width="1.9" ><path d="M456.6 138.6V133.8H461.6M496.6 133.8H501.6V138.6M501.6 172.8V177.8H496.6M461.6 177.8H456.6V172.8"/><rect x="463.2" y="140.4" width="31.6" height="12.4" rx="1"/><rect x="463.2" y="159.4" width="9.2" height="12.2" rx="1"/><rect x="479" y="159.4" width="15.8" height="12.2" rx="1"/></g>
<g fill="none" stroke="#ffffff" stroke-width="1.9" ><path d="M546.4 164.6H531.8V135.8H549.6L555.4 141.8V144.4"/><path d="M549.6 135.8V141.8H555.4"/><path d="M545.8 146.6L541.8 144.4L537.2 147V154.4L541.8 157L545.8 154.8"/><path d="M549.4 147H566.6L572.4 153V176.2H549.4Z"/><path d="M566.6 147V153H572.4"/><path d="M560.4 156.4L555.2 159.4L555.2 165.4L560.4 168.4L565.6 165.4L565.6 159.4Z"/></g>
<g fill="none" stroke="#8c8c8c" stroke-width="1.9" ><path d="M606.6 170.4H592.2V138.6H597.4M614.8 138.6H621V144.6"/><rect x="597.6" y="135.6" width="17.2" height="6" rx="1"/><path d="M609.2 147.6H626.4L632.4 153.6V176.2H609.2Z"/><path d="M626.4 147.6V153.6H632.4"/><path d="M620.4 156.6L615.2 159.6L615.2 165.6L620.4 168.6L625.6 165.6L625.6 159.6Z"/></g>
<g fill="none" stroke="#ffffff" stroke-width="1.9" ><circle cx="685.1" cy="155.9" r="20.3" stroke-dasharray="6.2 4.4"/><path d="M673.2 155.9H697M685.1 144V167.8"/></g>
<g fill="none" stroke="#8c8c8c" stroke-width="1.9" ><circle cx="745" cy="155.9" r="20.3" stroke-dasharray="6.2 4.4"/><path d="M733 155.9H757"/></g>
<g fill="none" stroke="#8c8c8c" stroke-width="1.9" ><path d="M808 164.6H798V135.8H826.8V146"/><rect x="809" y="147" width="29.4" height="29.2"/><rect x="817.4" y="153" width="12.8" height="17.6" rx="4.2"/></g>
<g fill="none" stroke="#8c8c8c" stroke-width="1.9" ><path d="M868 164.6H858V135.8H887.2V146"/><rect x="869" y="147" width="29.6" height="29.2"/><path d="M878.4 171V153.6H884.6a4.6 4.6 0 0 1 0 9.2H878.4"/></g>
<g fill="#8c8c8c"><rect x="931" y="136.1" width="40" height="1.6"/><rect x="931" y="142.8" width="40" height="2.3"/><rect x="931" y="149.9" width="40" height="3.0"/><rect x="931" y="156.9" width="40" height="3.9"/><rect x="931" y="163.7" width="40" height="4.9"/><rect x="931" y="170.3" width="40" height="5.8"/></g>
<g fill="none" stroke="#ffffff" stroke-width="1.9" ><path d="M1013.4 141.6L1002.8 149.8L1013.4 158"/><path d="M1003 149.8H1033.4a10.3 10.3 0 0 1 0 20.6H1016.8"/></g>
<g fill="none" stroke="#8c8c8c" stroke-width="1.9" ><path d="M1092.4 141.6L1103 149.8L1092.4 158"/><path d="M1102.8 149.8H1072.4a10.3 10.3 0 0 0 0 20.6H1089.4"/></g>
<path d="M1 306.4H93.9a5 5 0 0 1 5 5V1068.4a5 5 0 0 1-5 5H1Z" fill="#000" fill-opacity="0.46"/>
<path d="M1 478H98.9V552a5 5 0 0 1-5 5H1Z" fill="#000" fill-opacity="0.42"/>
<g fill="none" stroke="#f0f0f0" stroke-width="1.9"  stroke-linejoin="round"><rect x="38.6" y="334.6" width="22.8" height="22.8" rx="2.5"/><path d="M49.9 316.6L57.2 326.7H42.6Z"/><path d="M49.9 375.2L57.2 365.1H42.6Z"/><path d="M20.8 346L31 338.7V353.3Z"/><path d="M79.4 346L69.2 338.7V353.3Z"/></g>
<g fill="none" stroke="#f0f0f0" stroke-width="1.9" ><path d="M45.6 461.6H23.2a2.6 2.6 0 0 1-2.6-2.6V405.2a2.6 2.6 0 0 1 2.6-2.6H76.8a2.6 2.6 0 0 1 2.6 2.6V427" stroke-dasharray="9.2 5.2" stroke-dashoffset="-2"/><rect x="45.8" y="427.6" width="33.6" height="34" rx="2"/></g>
<path d="M28.6 410.6L38 411.4L35.4 414L42.6 421.2L39.2 424.6L32 417.4L29.4 420Z" fill="#fff"/>
<g fill="none" stroke="#f0f0f0" stroke-width="1.9"  stroke-linejoin="round"><path d="M51.6 503.2L73.4 525L51.6 546.8L29.8 525Z"/></g>
<g fill="none" stroke="#d4702a" stroke-width="1.9"  stroke-linejoin="round" stroke-linecap="round"><path d="M22.2 524.6C18.6 508 28 492.6 44 488.6C54.4 486.2 64 489.6 70.6 496.4"/><path d="M76.2 492L79 505.6L65 502.6Z"/></g>
<g fill="none" stroke="#7e7e7e" stroke-width="1.8"  stroke-linejoin="round" stroke-linecap="round"><path d="M44.6 575.4L79 584.2L70.4 618.8L35.8 609.8Z"/><rect x="20.4" y="628.2" width="59.2" height="4.8" rx="2"/><path d="M34.2 601.8C28.4 604.6 25.4 609.6 25.2 615.6"/><path d="M20.8 615.4H30.4L25.4 623.6Z"/></g>
<g fill="none" stroke="#7e7e7e" stroke-width="1.8" ><rect x="25.4" y="660.6" width="49.4" height="21.8" rx="2"/><rect x="25.4" y="696.8" width="49.4" height="22.2" rx="2"/><path d="M20.2 690H79.2" stroke-dasharray="6 3"/></g>
<g fill="none" stroke="#7e7e7e" stroke-width="1.8"  stroke-linejoin="round"><path d="M49.9 744.6L75.8 770.2L49.9 795.8L24 770.2Z"/><path d="M30.6 781.4V789.6L35.6 794.4L40.4 790.6M35.6 794.4V808"/><path d="M69.4 781.4V789.6L64.4 794.4L59.6 790.6M64.4 794.4V808"/><path d="M45.2 796.4L49.9 800.8L54.6 796.4M49.9 800.8V808"/></g>
<g fill="none" stroke="#7e7e7e" stroke-width="1.8"  stroke-linejoin="round"><path d="M49.9 832.8L79.6 845.6V879.2L49.9 892.4L20.4 879.2V845.6Z"/><path d="M20.4 845.6L49.9 857.4L79.6 845.6M49.9 857.4V892.4"/><path d="M62.2 856.7L67.0 854.5" stroke-width="1.8"/><path d="M66.4 859.1L71.2 856.9" stroke-width="1.8"/><path d="M62.2 865.1L67.0 862.9" stroke-width="1.8"/><path d="M58.0 871.1L62.8 868.9" stroke-width="1.8"/><path d="M53.8 877.1L58.6 874.9" stroke-width="1.8"/><path d="M58.0 879.5L62.8 877.3" stroke-width="1.8"/><path d="M62.2 881.7L67.0 879.5" stroke-width="1.8"/></g>
<clipPath id="fdmc"><path d="M20.4 931.4L49.9 943.2V977.8L20.4 964.6Z"/></clipPath>
<g fill="none" stroke="#7e7e7e" stroke-width="1.8"  stroke-linejoin="round"><path d="M49.9 918.2L79.6 931.0V964.6L49.9 977.8L20.4 964.6V931.0Z"/><path d="M20.4 931.0L49.9 942.8L79.6 931.0M49.9 942.8V977.8"/><g clip-path="url(#fdmc)"><path d="M21.6 935.5L23.6 938.5L25.5 937.1L27.5 940.0L29.4 938.6L31.4 941.6L33.3 940.2L35.2 943.2L37.2 941.7L39.2 944.7L41.1 943.3L43.0 946.3L45.0 944.9L47.0 947.8L48.9 946.4" stroke-width="1.1"/><path d="M21.6 940.6L23.6 943.6L25.5 942.2L27.5 945.1L29.4 943.7L31.4 946.7L33.3 945.3L35.2 948.3L37.2 946.8L39.2 949.8L41.1 948.4L43.0 951.4L45.0 950.0L47.0 952.9L48.9 951.5" stroke-width="1.1"/><path d="M21.6 945.7L23.6 948.7L25.5 947.3L27.5 950.2L29.4 948.8L31.4 951.8L33.3 950.4L35.2 953.4L37.2 951.9L39.2 954.9L41.1 953.5L43.0 956.5L45.0 955.1L47.0 958.0L48.9 956.6" stroke-width="1.1"/><path d="M21.6 950.8L23.6 953.8L25.5 952.4L27.5 955.3L29.4 953.9L31.4 956.9L33.3 955.5L35.2 958.5L37.2 957.0L39.2 960.0L41.1 958.6L43.0 961.6L45.0 960.2L47.0 963.1L48.9 961.7" stroke-width="1.1"/><path d="M21.6 955.9L23.6 958.9L25.5 957.5L27.5 960.4L29.4 959.0L31.4 962.0L33.3 960.6L35.2 963.6L37.2 962.1L39.2 965.1L41.1 963.7L43.0 966.7L45.0 965.3L47.0 968.2L48.9 966.8" stroke-width="1.1"/><path d="M21.6 961.0L23.6 964.0L25.5 962.6L27.5 965.5L29.4 964.1L31.4 967.1L33.3 965.7L35.2 968.7L37.2 967.2L39.2 970.2L41.1 968.8L43.0 971.8L45.0 970.4L47.0 973.3L48.9 971.9" stroke-width="1.1"/><path d="M21.6 966.1L23.6 969.1L25.5 967.7L27.5 970.6L29.4 969.2L31.4 972.2L33.3 970.8L35.2 973.8L37.2 972.3L39.2 975.3L41.1 973.9L43.0 976.9L45.0 975.5L47.0 978.4L48.9 977.0" stroke-width="1.1"/></g></g>
<g fill="none" stroke="#dcdcdc" stroke-width="1.9" ><rect x="25.4" y="1022.6" width="49.4" height="22.8" rx="2"/><path d="M31.4 1023V1029.0M36.7 1023V1029.0M42.0 1023V1032.4M47.3 1023V1029.0M52.6 1023V1029.0M57.9 1023V1032.4M63.2 1023V1029.0M68.5 1023V1029.0"/></g>
<path d="M1 1167H82a5 5 0 0 1 5 5V1260H10a9 9 0 0 1-9-9Z" fill="#000" fill-opacity="0.70"/>
<path d="M87 1167H169.8a5 5 0 0 1 5 5V1260H87Z" fill="#000" fill-opacity="0.46"/>
<g fill="none" stroke="#fff" stroke-width="1.9"  stroke-linejoin="round"><rect x="18" y="1200.2" width="43.6" height="42.8" rx="1"/><path d="M18 1200.2L35.6 1184.2H75a1.6 1.6 0 0 1 1.6 1.6L76.4 1227.8L61.6 1243"/><path d="M61.6 1200.2L76 1185"/></g>
<g fill="none" stroke="#fff" stroke-width="1.7"  stroke-linejoin="round"><path d="M99.4 1200.6L116.8 1185.2H157.8L142.4 1200.6Z"/><path d="M98.6 1205.9H142.4L158.2 1190.3"/><path d="M98.6 1211.2H142.4L158.2 1195.6"/><path d="M98.6 1216.5H142.4L158.2 1200.9"/><path d="M98.6 1221.8H142.4L158.2 1206.2"/><path d="M98.6 1227.1H142.4L158.2 1211.5"/><path d="M98.6 1232.4H142.4L158.2 1216.8"/><path d="M98.6 1237.7H142.4L158.2 1222.1"/><path d="M98.6 1243.0H142.4L158.2 1227.4"/></g>
<polygon points="92.0,496.6 124.9,485.5 118.5,478.2 147.7,448.7 139.6,440.8 110.1,470.2 102.9,463.9" fill="#ff0000" stroke="#000" stroke-width="2" stroke-linejoin="round"/>
<polygon points="1061.6,363.3 1094.5,352.2 1088.1,344.9 1117.3,315.4 1109.2,307.5 1079.7,336.9 1072.5,330.6" fill="#ff0000" stroke="#000" stroke-width="2" stroke-linejoin="round"/>
</g>
<circle cx="20.6" cy="19.6" r="10.4" fill="#fff"/>
<path d="M16.4 24.0A6.3 6.3 0 0 1 25.6 14.2Z" fill="#333333"/>
<path d="M16.0 24.8A6.3 6.3 0 0 0 25.6 16.2Z" fill="#ed6b21"/>
<path d="M1709.5 20.5H1721.5" stroke="#000" stroke-width="1.1" fill="none"/>
<rect x="1769.6" y="14.6" width="11" height="11" rx="1.8" stroke="#000" stroke-width="1.2" fill="none"/>
<path d="M1830.2 14.2L1841.8 25.8M1841.8 14.2L1830.2 25.8" stroke="#000" stroke-width="1.25" fill="none" stroke-linecap="round"/>
<circle cx="1304.2" cy="90.2" r="6.2" stroke="#e0702c" stroke-width="1.7" fill="none"/>
<path d="M1308.8 94.8L1314.6 100.6" stroke="#8a8a8a" stroke-width="3" stroke-linecap="round" fill="none"/>
<path d="M1595.99 97.20L1588.20 101.70L1580.41 97.20L1580.41 88.20L1588.20 83.70L1595.99 88.20Z" fill="#e70000"/>
<path d="M1701.40 89.80L1708.20 95.40L1715.00 89.80" fill="none" stroke="#4a4a4a" stroke-width="2.1" stroke-linecap="round" stroke-linejoin="round"/>
<g fill="none" stroke="#7a7a7a" stroke-width="1.5"><circle cx="1761.2" cy="92.6" r="13.6"/><circle cx="1761.2" cy="88.4" r="5"/><path d="M1751.6 102.2C1752.4 96.6 1756.4 95.4 1761.2 95.4C1766 95.4 1770 96.6 1770.8 102.2"/></g>
<path d="M1835.50 89.80L1842.30 95.40L1849.10 89.80" fill="none" stroke="#4a4a4a" stroke-width="2.1" stroke-linecap="round" stroke-linejoin="round"/>
<path d="M1818.20 154.50L1825.00 160.10L1831.80 154.50" fill="none" stroke="#4a4a4a" stroke-width="2.0" stroke-linecap="round" stroke-linejoin="round"/>
<path d="M1351.06 148.31L1353.94 148.31L1354.22 150.24L1356.35 151.12L1357.91 149.96L1359.94 151.99L1358.78 153.55L1359.66 155.68L1361.59 155.96L1361.59 158.84L1359.66 159.12L1358.78 161.25L1359.94 162.81L1357.91 164.84L1356.35 163.68L1354.22 164.56L1353.94 166.49L1351.06 166.49L1350.78 164.56L1348.65 163.68L1347.09 164.84L1345.06 162.81L1346.22 161.25L1345.34 159.12L1343.41 158.84L1343.41 155.96L1345.34 155.68L1346.22 153.55L1345.06 151.99L1347.09 149.96L1348.65 151.12L1350.78 150.24ZM1346.43 157.40a6.07 6.07 0 1 0 12.14 0a6.07 6.07 0 1 0 -12.14 0Z" fill="#7a7a7a" fill-rule="evenodd" stroke="#7a7a7a" stroke-width="0.5" stroke-linejoin="round"/><path d="M1351.72 151.94L1353.28 151.94L1353.64 152.94L1354.84 153.44L1355.81 152.99L1356.91 154.09L1356.46 155.06L1356.96 156.26L1357.96 156.62L1357.96 158.18L1356.96 158.54L1356.46 159.74L1356.91 160.71L1355.81 161.81L1354.84 161.36L1353.64 161.86L1353.28 162.86L1351.72 162.86L1351.36 161.86L1350.16 161.36L1349.19 161.81L1348.09 160.71L1348.54 159.74L1348.04 158.54L1347.04 158.18L1347.04 156.62L1348.04 156.26L1348.54 155.06L1348.09 154.09L1349.19 152.99L1350.16 153.44L1351.36 152.94ZM1349.19 157.40a3.31 3.31 0 1 0 6.62 0a3.31 3.31 0 1 0 -6.62 0Z" fill="#ed6b21" fill-rule="evenodd" stroke="#ed6b21" stroke-width="0.5" stroke-linejoin="round"/>
<path d="M1851.90 148.02L1854.90 148.02L1855.19 150.03L1857.41 150.95L1859.04 149.73L1861.17 151.86L1859.95 153.49L1860.87 155.71L1862.88 156.00L1862.88 159.00L1860.87 159.29L1859.95 161.51L1861.17 163.14L1859.04 165.27L1857.41 164.05L1855.19 164.97L1854.90 166.98L1851.90 166.98L1851.61 164.97L1849.39 164.05L1847.76 165.27L1845.63 163.14L1846.85 161.51L1845.93 159.29L1843.92 159.00L1843.92 156.00L1845.93 155.71L1846.85 153.49L1845.63 151.86L1847.76 149.73L1849.39 150.95L1851.61 150.03ZM1847.06 157.50a6.34 6.34 0 1 0 12.67 0a6.34 6.34 0 1 0 -12.67 0Z" fill="#7a7a7a" fill-rule="evenodd" stroke="#7a7a7a" stroke-width="0.5" stroke-linejoin="round"/><path d="M1852.59 151.80L1854.21 151.80L1854.59 152.85L1855.84 153.37L1856.86 152.89L1858.01 154.04L1857.53 155.06L1858.05 156.31L1859.10 156.69L1859.10 158.31L1858.05 158.69L1857.53 159.94L1858.01 160.96L1856.86 162.11L1855.84 161.63L1854.59 162.15L1854.21 163.20L1852.59 163.20L1852.21 162.15L1850.96 161.63L1849.94 162.11L1848.79 160.96L1849.27 159.94L1848.75 158.69L1847.70 158.31L1847.70 156.69L1848.75 156.31L1849.27 155.06L1848.79 154.04L1849.94 152.89L1850.96 153.37L1852.21 152.85ZM1849.94 157.50a3.46 3.46 0 1 0 6.91 0a3.46 3.46 0 1 0 -6.91 0Z" fill="#ed6b21" fill-rule="evenodd" stroke="#ed6b21" stroke-width="0.5" stroke-linejoin="round"/>
<path d="M1818.20 208.50L1825.00 214.10L1831.80 208.50" fill="none" stroke="#4a4a4a" stroke-width="2.0" stroke-linecap="round" stroke-linejoin="round"/>
<path d="M1851.90 202.02L1854.90 202.02L1855.19 204.03L1857.41 204.95L1859.04 203.73L1861.17 205.86L1859.95 207.49L1860.87 209.71L1862.88 210.00L1862.88 213.00L1860.87 213.29L1859.95 215.51L1861.17 217.14L1859.04 219.27L1857.41 218.05L1855.19 218.97L1854.90 220.98L1851.90 220.98L1851.61 218.97L1849.39 218.05L1847.76 219.27L1845.63 217.14L1846.85 215.51L1845.93 213.29L1843.92 213.00L1843.92 210.00L1845.93 209.71L1846.85 207.49L1845.63 205.86L1847.76 203.73L1849.39 204.95L1851.61 204.03ZM1847.06 211.50a6.34 6.34 0 1 0 12.67 0a6.34 6.34 0 1 0 -12.67 0Z" fill="#7a7a7a" fill-rule="evenodd" stroke="#7a7a7a" stroke-width="0.5" stroke-linejoin="round"/><path d="M1852.59 205.80L1854.21 205.80L1854.59 206.85L1855.84 207.37L1856.86 206.89L1858.01 208.04L1857.53 209.06L1858.05 210.31L1859.10 210.69L1859.10 212.31L1858.05 212.69L1857.53 213.94L1858.01 214.96L1856.86 216.11L1855.84 215.63L1854.59 216.15L1854.21 217.20L1852.59 217.20L1852.21 216.15L1850.96 215.63L1849.94 216.11L1848.79 214.96L1849.27 213.94L1848.75 212.69L1847.70 212.31L1847.70 210.69L1848.75 210.31L1849.27 209.06L1848.79 208.04L1849.94 206.89L1850.96 207.37L1852.21 206.85ZM1849.94 211.50a3.46 3.46 0 1 0 6.91 0a3.46 3.46 0 1 0 -6.91 0Z" fill="#ed6b21" fill-rule="evenodd" stroke="#ed6b21" stroke-width="0.5" stroke-linejoin="round"/>
<path d="M1818.20 262.50L1825.00 268.10L1831.80 262.50" fill="none" stroke="#4a4a4a" stroke-width="2.0" stroke-linecap="round" stroke-linejoin="round"/>
<g fill="none" stroke="#9a9a9a" stroke-width="1.4"><rect x="1338.8" y="256.8" width="17.6" height="16.6"/><path d="M1338.8 262.4H1356.4"/></g>
<path d="M1338.2 273.4H1357" stroke="#808080" stroke-width="2.2" fill="none"/>
<path d="M1341 260.2H1346V264.6L1343.5 266.4L1341 264.6Z" fill="#ed6b21"/>
<path d="M1851.90 256.02L1854.90 256.02L1855.19 258.03L1857.41 258.95L1859.04 257.73L1861.17 259.86L1859.95 261.49L1860.87 263.71L1862.88 264.00L1862.88 267.00L1860.87 267.29L1859.95 269.51L1861.17 271.14L1859.04 273.27L1857.41 272.05L1855.19 272.97L1854.90 274.98L1851.90 274.98L1851.61 272.97L1849.39 272.05L1847.76 273.27L1845.63 271.14L1846.85 269.51L1845.93 267.29L1843.92 267.00L1843.92 264.00L1845.93 263.71L1846.85 261.49L1845.63 259.86L1847.76 257.73L1849.39 258.95L1851.61 258.03ZM1847.06 265.50a6.34 6.34 0 1 0 12.67 0a6.34 6.34 0 1 0 -12.67 0Z" fill="#7a7a7a" fill-rule="evenodd" stroke="#7a7a7a" stroke-width="0.5" stroke-linejoin="round"/><path d="M1852.59 259.80L1854.21 259.80L1854.59 260.85L1855.84 261.37L1856.86 260.89L1858.01 262.04L1857.53 263.06L1858.05 264.31L1859.10 264.69L1859.10 266.31L1858.05 266.69L1857.53 267.94L1858.01 268.96L1856.86 270.11L1855.84 269.63L1854.59 270.15L1854.21 271.20L1852.59 271.20L1852.21 270.15L1850.96 269.63L1849.94 270.11L1848.79 268.96L1849.27 267.94L1848.75 266.69L1847.70 266.31L1847.70 264.69L1848.75 264.31L1849.27 263.06L1848.79 262.04L1849.94 260.89L1850.96 261.37L1852.21 260.85ZM1849.94 265.50a3.46 3.46 0 1 0 6.91 0a3.46 3.46 0 1 0 -6.91 0Z" fill="#ed6b21" fill-rule="evenodd" stroke="#ed6b21" stroke-width="0.5" stroke-linejoin="round"/>
<path d="M1818.20 299.50L1825.00 305.10L1831.80 299.50" fill="none" stroke="#4a4a4a" stroke-width="2.0" stroke-linecap="round" stroke-linejoin="round"/>
<path d="M1448.20 331.50L1455.00 337.10L1461.80 331.50" fill="none" stroke="#4a4a4a" stroke-width="2.0" stroke-linecap="round" stroke-linejoin="round"/>
<path d="M1333.00 396.20L1337.70 400.60L1342.40 396.20" fill="none" stroke="#1a1a1a" stroke-width="1.5" stroke-linecap="round" stroke-linejoin="round"/>
<path d="M1598.9 398.4C1601.8 393.6 1604.6 392.2 1607.5 392.2C1610.4 392.2 1613.2 393.6 1616.1 398.4C1613.2 403.2 1610.4 404.6 1607.5 404.6C1604.6 404.6 1601.8 403.2 1598.9 398.4Z" fill="none" stroke="#7a7a7a" stroke-width="2.4"/>
<circle cx="1607.5" cy="398.4" r="2.9" fill="#7a7a7a"/>
<path d="M1743 395.2H1739.6a1.8 1.8 0 0 0-1.8 1.8V405.2a1.8 1.8 0 0 0 1.8 1.8H1748.2a1.8 1.8 0 0 0 1.8-1.8V401.8" fill="none" stroke="#8a8a8a" stroke-width="1.3"/>
<circle cx="1749.6" cy="395.4" r="3.4" fill="#fff" stroke="#ed6b21" stroke-width="1.9"/>
<path d="M1363.3 427.2V420.6a3 3 0 0 1 3 -3H1376.5a3 3 0 0 1 3 3V430.8a3 3 0 0 1 -3 3H1369.5" fill="none" stroke="#7a7a7a" stroke-width="1.3"/><path d="M1359.3 433.5H1367.9M1363.6 429.2V437.8" stroke="#ed6b21" stroke-width="1.4" fill="none"/>
<path d="M1745.06 418.51L1747.94 418.51L1748.22 420.44L1750.35 421.32L1751.91 420.16L1753.94 422.19L1752.78 423.75L1753.66 425.88L1755.59 426.16L1755.59 429.04L1753.66 429.32L1752.78 431.45L1753.94 433.01L1751.91 435.04L1750.35 433.88L1748.22 434.76L1747.94 436.69L1745.06 436.69L1744.78 434.76L1742.65 433.88L1741.09 435.04L1739.06 433.01L1740.22 431.45L1739.34 429.32L1737.41 429.04L1737.41 426.16L1739.34 425.88L1740.22 423.75L1739.06 422.19L1741.09 420.16L1742.65 421.32L1744.78 420.44ZM1740.43 427.60a6.07 6.07 0 1 0 12.14 0a6.07 6.07 0 1 0 -12.14 0Z" fill="#7a7a7a" fill-rule="evenodd" stroke="#7a7a7a" stroke-width="0.5" stroke-linejoin="round"/><path d="M1745.72 422.14L1747.28 422.14L1747.64 423.14L1748.84 423.64L1749.81 423.19L1750.91 424.29L1750.46 425.26L1750.96 426.46L1751.96 426.82L1751.96 428.38L1750.96 428.74L1750.46 429.94L1750.91 430.91L1749.81 432.01L1748.84 431.56L1747.64 432.06L1747.28 433.06L1745.72 433.06L1745.36 432.06L1744.16 431.56L1743.19 432.01L1742.09 430.91L1742.54 429.94L1742.04 428.74L1741.04 428.38L1741.04 426.82L1742.04 426.46L1742.54 425.26L1742.09 424.29L1743.19 423.19L1744.16 423.64L1745.36 423.14ZM1743.19 427.60a3.31 3.31 0 1 0 6.62 0a3.31 3.31 0 1 0 -6.62 0Z" fill="#ed6b21" fill-rule="evenodd" stroke="#ed6b21" stroke-width="0.5" stroke-linejoin="round"/>
<path d="M1363.3 456.2V449.6a3 3 0 0 1 3 -3H1376.5a3 3 0 0 1 3 3V459.8a3 3 0 0 1 -3 3H1369.5" fill="none" stroke="#7a7a7a" stroke-width="1.3"/><path d="M1359.3 462.4H1367.9" stroke="#ed6b21" stroke-width="1.5" fill="none"/>
<path d="M1745.06 447.31L1747.94 447.31L1748.22 449.24L1750.35 450.12L1751.91 448.96L1753.94 450.99L1752.78 452.55L1753.66 454.68L1755.59 454.96L1755.59 457.84L1753.66 458.12L1752.78 460.25L1753.94 461.81L1751.91 463.84L1750.35 462.68L1748.22 463.56L1747.94 465.49L1745.06 465.49L1744.78 463.56L1742.65 462.68L1741.09 463.84L1739.06 461.81L1740.22 460.25L1739.34 458.12L1737.41 457.84L1737.41 454.96L1739.34 454.68L1740.22 452.55L1739.06 450.99L1741.09 448.96L1742.65 450.12L1744.78 449.24ZM1740.43 456.40a6.07 6.07 0 1 0 12.14 0a6.07 6.07 0 1 0 -12.14 0Z" fill="#7a7a7a" fill-rule="evenodd" stroke="#7a7a7a" stroke-width="0.5" stroke-linejoin="round"/><path d="M1745.72 450.94L1747.28 450.94L1747.64 451.94L1748.84 452.44L1749.81 451.99L1750.91 453.09L1750.46 454.06L1750.96 455.26L1751.96 455.62L1751.96 457.18L1750.96 457.54L1750.46 458.74L1750.91 459.71L1749.81 460.81L1748.84 460.36L1747.64 460.86L1747.28 461.86L1745.72 461.86L1745.36 460.86L1744.16 460.36L1743.19 460.81L1742.09 459.71L1742.54 458.74L1742.04 457.54L1741.04 457.18L1741.04 455.62L1742.04 455.26L1742.54 454.06L1742.09 453.09L1743.19 451.99L1744.16 452.44L1745.36 451.94ZM1743.19 456.40a3.31 3.31 0 1 0 6.62 0a3.31 3.31 0 1 0 -6.62 0Z" fill="#ed6b21" fill-rule="evenodd" stroke="#ed6b21" stroke-width="0.5" stroke-linejoin="round"/>
<path d="M1511.30 1017.80L1518.10 1023.40L1524.90 1017.80" fill="none" stroke="#4a4a4a" stroke-width="2.0" stroke-linecap="round" stroke-linejoin="round"/>
<g fill="none" stroke="#000" stroke-width="2.6" stroke-linejoin="round" stroke-linecap="round"><path d="M1577.3 1012.6H1572.5V1027.6H1577.3"/><path d="M1583.9 1012.6H1588.7V1027.6H1583.9"/></g><path d="M1580.6 1011.0V1029.4" stroke="#000" stroke-width="1" stroke-dasharray="3 1.6" fill="none"/>
<g fill="none" stroke="#000" stroke-width="2.6" stroke-linejoin="round" stroke-linecap="round"><path d="M1655.3 1012.6H1650.5V1027.6H1655.3"/><path d="M1661.9 1012.6H1666.7V1027.6H1661.9"/></g><path d="M1658.6 1011.0V1029.4" stroke="#000" stroke-width="1" stroke-dasharray="3 1.6" fill="none"/>
<g fill="none" stroke="#000" stroke-width="2.6" stroke-linejoin="round" stroke-linecap="round"><path d="M1733.3 1012.6H1728.5V1027.6H1733.3"/><path d="M1739.9 1012.6H1744.7V1027.6H1739.9"/></g><path d="M1736.6 1011.0V1029.4" stroke="#000" stroke-width="1" stroke-dasharray="3 1.6" fill="none"/>
<path d="M1343.6 1133.6V1129.6a4.7 4.7 0 0 1 9.4 0V1133.6" fill="none" stroke="#808080" stroke-width="2.2"/>
<rect x="1340.8" y="1133" width="15.4" height="8.8" rx="1.5" fill="#808080"/>
<path d="M1346.4 1137.4H1350.6" stroke="#fff" stroke-width="2.2" stroke-linecap="round"/>
<polygon points="1733.4,1086.5 1766.3,1075.4 1759.9,1068.1 1789.1,1038.6 1781.0,1030.7 1751.5,1060.1 1744.3,1053.8" fill="#ff0000" stroke="#000" stroke-width="2" stroke-linejoin="round"/>
<rect x="0.5" y="0.5" width="1867" height="1260" rx="8" ry="8" fill="none" stroke="#a6a6a6" stroke-width="1"/>
</svg>
<span id="t0" class="t" style="left:39.14px;top:10.05px;font-size:15.8px;line-height:19.75px;font-weight:400;color:#000;transform:scaleX(0.9744)">*Example - PrusaSlicer-2.9.2 based on Slic3r</span>
<span id="t1" class="t" style="left:9.18px;top:43.55px;font-size:15.8px;line-height:19.75px;font-weight:400;color:#000;transform:scaleX(0.9787)">File</span>
<span id="t2" class="t" style="left:51.34px;top:43.55px;font-size:15.8px;line-height:19.75px;font-weight:400;color:#000;transform:scaleX(0.9792)">Edit</span>
<span id="t3" class="t" style="left:96.60px;top:43.55px;font-size:15.8px;line-height:19.75px;font-weight:400;color:#000;transform:scaleX(1.0208)">Window</span>
<span id="t4" class="t" style="left:172.42px;top:43.55px;font-size:15.8px;line-height:19.75px;font-weight:400;color:#000;transform:scaleX(0.9872)">View</span>
<span id="t5" class="t" style="left:223.50px;top:43.55px;font-size:15.8px;line-height:19.75px;font-weight:400;color:#000;transform:scaleX(1.0332)">Configuration</span>
<span id="t6" class="t" style="left:337.09px;top:43.55px;font-size:15.8px;line-height:19.75px;font-weight:400;color:#000;transform:scaleX(1.0239)">Help</span>
<span id="t7" class="t" style="left:33.29px;top:83.65px;font-size:15.8px;line-height:19.75px;font-weight:400;color:#fff;transform:scaleX(0.9873)">Plater</span>
<span id="t8" class="t" style="left:131.74px;top:83.65px;font-size:15.8px;line-height:19.75px;font-weight:400;color:#000;transform:scaleX(0.9986)">Print Settings</span>
<span id="t9" class="t" style="left:284.86px;top:83.65px;font-size:15.8px;line-height:19.75px;font-weight:400;color:#000;transform:scaleX(0.9803)">Filaments</span>
<span id="t10" class="t" style="left:410.74px;top:83.65px;font-size:15.8px;line-height:19.75px;font-weight:400;color:#000;transform:scaleX(1.0031)">Printers</span>
<span id="t11" class="t" style="left:523.76px;top:83.65px;font-size:15.8px;line-height:19.75px;font-weight:400;color:#000;transform:scaleX(0.9925)">Printables</span>
<span id="t12" class="t" style="left:651.36px;top:83.65px;font-size:15.8px;line-height:19.75px;font-weight:400;color:#000;transform:scaleX(0.9796)">Physical Printer</span>
<span id="t13" class="t" style="left:939.36px;top:83.85px;font-size:15.8px;line-height:19.75px;font-weight:400;color:#000;transform:scaleX(0.9733)">Enter a search term</span>
<span id="t14" class="t" style="left:1604.36px;top:84.45px;font-size:15.8px;line-height:19.75px;font-weight:400;color:#000;transform:scaleX(0.9820)">Expert mode</span>
<span id="t15" class="t" style="left:1782.72px;top:84.45px;font-size:15.8px;line-height:19.75px;font-weight:400;color:#000;transform:scaleX(1.0046)">Log in</span>
<span id="t16" class="t" style="left:1326.74px;top:123.04px;font-size:15.6px;line-height:19.5px;font-weight:400;color:#000;transform:scaleX(1.0156)">Print settings:</span>
<span id="t17" class="t" style="left:1394.92px;top:149.24px;font-size:15.6px;line-height:19.5px;font-weight:400;color:#000;transform:scaleX(0.9713)">PIF_Fast (0.4) (modified)</span>
<span id="t18" class="t" style="left:1326.74px;top:176.04px;font-size:15.6px;line-height:19.5px;font-weight:400;color:#000;transform:scaleX(1.0091)">Filament:</span>
<span id="t19" class="t" style="left:1394.32px;top:203.24px;font-size:15.6px;line-height:19.5px;font-weight:400;color:#000;transform:scaleX(0.9448)">Jessie Elixir PLA (0.4)</span>
<span id="t20" class="t" style="left:1326.65px;top:230.04px;font-size:15.6px;line-height:19.5px;font-weight:400;color:#000;transform:scaleX(1.0311)">Printer:</span>
<span id="t21" class="t" style="left:1382.36px;top:257.24px;font-size:15.6px;line-height:19.5px;font-weight:400;color:#000;transform:scaleX(0.9845)">Redvoron_0.4 * 0.4_Print</span>
<span id="t22" class="t" style="left:1328.44px;top:293.64px;font-size:15.6px;line-height:19.5px;font-weight:400;color:#000;transform:scaleX(1.0199)">Supports:</span>
<span id="t23" class="t" style="left:1407.51px;top:293.84px;font-size:15.6px;line-height:19.5px;font-weight:400;color:#000;transform:scaleX(1.0499)">None</span>
<span id="t24" class="t" style="left:1327.54px;top:324.64px;font-size:15.6px;line-height:19.5px;font-weight:400;color:#000;transform:scaleX(1.1400)">Infill:</span>
<span id="t25" class="t" style="left:1374.50px;top:325.84px;font-size:15.6px;line-height:19.5px;font-weight:400;color:#000;transform:scaleX(1.0922)">35</span>
<span id="t26" class="t" style="left:1492.93px;top:324.64px;font-size:15.6px;line-height:19.5px;font-weight:400;color:#000;transform:scaleX(1.0575)">Brim:</span>
<span id="t27" class="t" style="left:1333.54px;top:362.24px;font-size:15.6px;line-height:19.5px;font-weight:400;color:#000;transform:scaleX(1.0488)">Name</span>
<span id="t28" class="t" style="left:1721.62px;top:362.24px;font-size:15.6px;line-height:19.5px;font-weight:400;color:#000;transform:scaleX(1.0256)">Editing</span>
<span id="t29" class="t" style="left:1350.48px;top:389.64px;font-size:15.6px;line-height:19.5px;font-weight:400;color:#000;transform:scaleX(0.9638)">Example</span>
<span id="t30" class="t" style="left:1383.95px;top:418.64px;font-size:15.6px;line-height:19.5px;font-weight:400;color:#000;transform:scaleX(0.9702)">Example v3</span>
<span id="t31" class="t" style="left:1384.56px;top:447.64px;font-size:15.6px;line-height:19.5px;font-weight:400;color:#fff;transform:scaleX(0.9791)">Triple_6mm.step</span>
<span id="t32" class="t" style="left:1339.46px;top:979.94px;font-size:15.6px;line-height:19.5px;font-weight:700;color:#000;transform:scaleX(1.0604)">Part manipulation</span>
<span id="t33" class="t" style="left:1347.60px;top:1011.74px;font-size:15.6px;line-height:19.5px;font-weight:400;color:#000;transform:scaleX(1.0186)">World coordinates</span>
<span id="t34" class="t" style="left:1554.63px;top:1010.54px;font-size:15.6px;line-height:19.5px;font-weight:700;color:#000;transform:scaleX(1.0318)">X</span>
<span id="t35" class="t" style="left:1633.26px;top:1010.54px;font-size:15.6px;line-height:19.5px;font-weight:700;color:#000;transform:scaleX(0.9507)">Y</span>
<span id="t36" class="t" style="left:1711.42px;top:1010.54px;font-size:15.6px;line-height:19.5px;font-weight:700;color:#000;transform:scaleX(1.0243)">Z</span>
<span id="t37" class="t" style="left:1337.86px;top:1042.54px;font-size:15.6px;line-height:19.5px;font-weight:400;color:#000;transform:scaleX(0.9989)">Position:</span>
<span id="t38" class="t" style="left:1545.13px;top:1044.14px;font-size:15.6px;line-height:19.5px;font-weight:400;color:#000;transform:scaleX(1.0010)">150</span>
<span id="t39" class="t" style="left:1623.13px;top:1044.14px;font-size:15.6px;line-height:19.5px;font-weight:400;color:#000;transform:scaleX(1.0010)">150</span>
<span id="t40" class="t" style="left:1701.50px;top:1044.14px;font-size:15.6px;line-height:19.5px;font-weight:400;color:#000;transform:scaleX(0.9683)">3.5</span>
<span id="t41" class="t" style="left:1769.23px;top:1042.54px;font-size:15.6px;line-height:19.5px;font-weight:400;color:#000;transform:scaleX(1.1260)">mm</span>
<span id="t42" class="t" style="left:1337.86px;top:1074.74px;font-size:15.6px;line-height:19.5px;font-weight:400;color:#000;transform:scaleX(0.9971)">Rotate (relative):</span>
<span id="t43" class="t" style="left:1545.20px;top:1076.34px;font-size:15.6px;line-height:19.5px;font-weight:400;color:#000;transform:scaleX(1.0792)">0</span>
<span id="t44" class="t" style="left:1623.20px;top:1076.34px;font-size:15.6px;line-height:19.5px;font-weight:400;color:#000;transform:scaleX(1.0792)">0</span>
<span id="t45" class="t" style="left:1701.20px;top:1076.34px;font-size:15.6px;line-height:19.5px;font-weight:400;color:#000;transform:scaleX(1.0792)">0</span>
<span id="t46" class="t" style="left:1769.48px;top:1074.74px;font-size:15.6px;line-height:19.5px;font-weight:400;color:#000;transform:scaleX(1.0106)">°</span>
<span id="t47" class="t" style="left:1362.46px;top:1106.74px;font-size:15.6px;line-height:19.5px;font-weight:400;color:#000;transform:scaleX(0.9355)">Scale:</span>
<span id="t48" class="t" style="left:1545.13px;top:1108.34px;font-size:15.6px;line-height:19.5px;font-weight:400;color:#000;transform:scaleX(1.0010)">100</span>
<span id="t49" class="t" style="left:1623.13px;top:1108.34px;font-size:15.6px;line-height:19.5px;font-weight:400;color:#000;transform:scaleX(1.0010)">100</span>
<span id="t50" class="t" style="left:1701.13px;top:1108.34px;font-size:15.6px;line-height:19.5px;font-weight:400;color:#000;transform:scaleX(1.0010)">100</span>
<span id="t51" class="t" style="left:1770.02px;top:1106.74px;font-size:15.6px;line-height:19.5px;font-weight:400;color:#000;transform:scaleX(0.9203)">%</span>
<span id="t52" class="t" style="left:1362.44px;top:1139.64px;font-size:15.6px;line-height:19.5px;font-weight:400;color:#000;transform:scaleX(1.0064)">Size [World]:</span>
<span id="t53" class="t" style="left:1545.50px;top:1141.24px;font-size:15.6px;line-height:19.5px;font-weight:400;color:#000;transform:scaleX(0.9854)">8.72</span>
<span id="t54" class="t" style="left:1623.13px;top:1141.24px;font-size:15.6px;line-height:19.5px;font-weight:400;color:#000;transform:scaleX(1.0010)">150</span>
<span id="t55" class="t" style="left:1701.50px;top:1141.24px;font-size:15.6px;line-height:19.5px;font-weight:400;color:#000;transform:scaleX(1.0709)">7</span>
<span id="t56" class="t" style="left:1769.23px;top:1139.64px;font-size:15.6px;line-height:19.5px;font-weight:400;color:#000;transform:scaleX(1.1260)">mm</span>
<span id="t57" class="t" style="left:1366.29px;top:1172.64px;font-size:15.6px;line-height:19.5px;font-weight:400;color:#000;transform:scaleX(0.9744)">Inches</span>
<span id="t58" class="t" style="left:1559.50px;top:1223.64px;font-size:15.6px;line-height:19.5px;font-weight:700;color:#000;transform:scaleX(1.0223)">Slice now</span>
</body></html>
